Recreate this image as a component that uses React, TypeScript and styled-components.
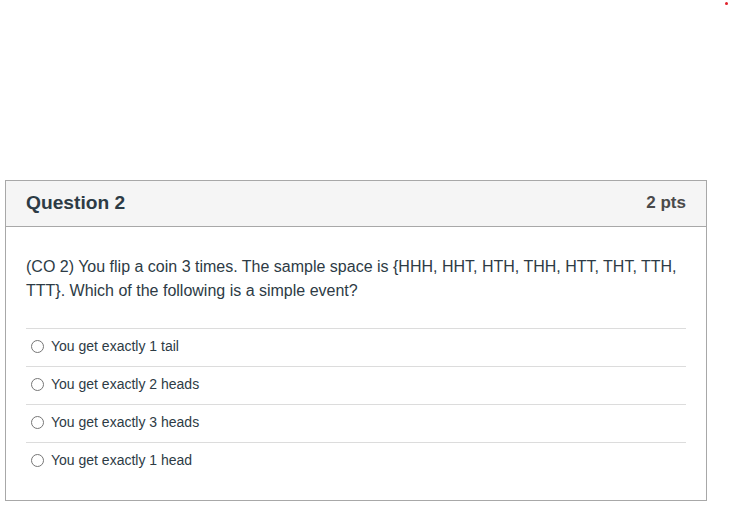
import React from "react";
import styled, { createGlobalStyle } from "styled-components";

const prompt =
  "(CO 2) You flip a coin 3 times. The sample space is {HHH, HHT, HTH, THH, HTT, THT, TTH, TTT}. Which of the following is a simple event?";

const options = [
  "You get exactly 1 tail",
  "You get exactly 2 heads",
  "You get exactly 3 heads",
  "You get exactly 1 head",
];

const GlobalStyle = createGlobalStyle`
  html, body {
    margin: 0;
    padding: 0;
    background: #fff;
  }
  body {
    font-family: "Liberation Sans", Arial, sans-serif;
    color: #2d3b45;
  }
`;

const Page = styled.div`
  position: relative;
  width: 730px;
  height: 516px;
  padding: 180px 0 0 5px;
  box-sizing: border-box;
`;

const Marker = styled.span`
  position: absolute;
  top: 2px;
  left: 725px;
  width: 3px;
  height: 3px;
  border-radius: 50%;
  background: #e0202a;
`;

const Card = styled.div`
  width: 702px;
  box-sizing: border-box;
  border: 1px solid #a8a8a8;
  background: #fff;
`;

const Header = styled.div`
  display: flex;
  align-items: center;
  justify-content: space-between;
  height: 43px;
  padding: 0 20px 2px;
  background: #f5f5f5;
  border-bottom: 1px solid #a8a8a8;
`;

const Title = styled.h2`
  margin: 0;
  font-size: 19.2px;
  font-weight: 700;
  color: #2d3b45;
`;

const Points = styled.span`
  font-size: 17px;
  font-weight: 700;
  color: #4a4a4a;
`;

const Body = styled.div`
  padding: 28px 20px 20px;
`;

const Prompt = styled.p`
  margin: 0 0 25px;
  font-size: 16px;
  line-height: 24px;
  color: #2d3b45;
`;

const AnswerList = styled.div`
  display: flex;
  flex-direction: column;
`;

const Answer = styled.label`
  display: flex;
  align-items: center;
  gap: 7px;
  height: 38px;
  padding: 0 0 3px 5px;
  border-top: 1px solid #dcdcdc;
  font-size: 14px;
  color: #2d3b45;
  box-sizing: border-box;
`;

const Radio = styled.span`
  width: 13px;
  height: 13px;
  box-sizing: border-box;
  border: 1px solid #767676;
  border-radius: 50%;
  background: #fff;
`;

const App = () => {
  return (
    <Page>
      <GlobalStyle />
      <Marker />
      <Card>
        <Header>
          <Title>Question 2</Title>
          <Points>2 pts</Points>
        </Header>
        <Body>
          <Prompt>{prompt}</Prompt>
          <AnswerList>
            {options.map((option, index) => (
              <Answer key={index}>
                <Radio />
                {option}
              </Answer>
            ))}
          </AnswerList>
        </Body>
      </Card>
    </Page>
  );
};

export default App;
